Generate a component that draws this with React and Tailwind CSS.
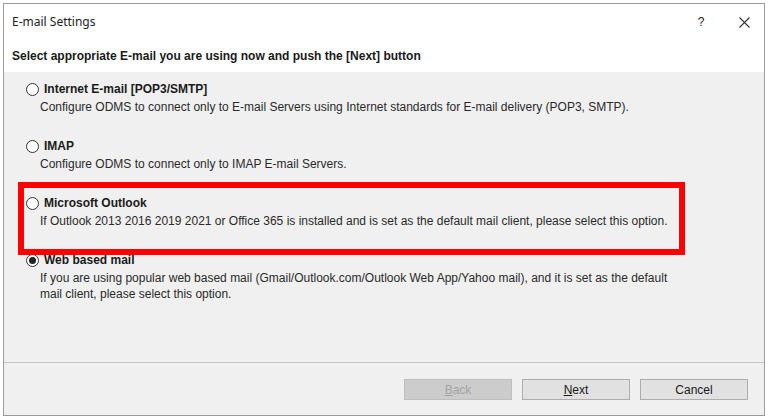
import React, { useState } from 'react';

const options = [
  {
    id: 'pop3',
    label: 'Internet E-mail [POP3/SMTP]',
    desc: ['Configure ODMS to connect only to E-mail Servers using Internet standards for E-mail delivery (POP3, SMTP).'],
  },
  {
    id: 'imap',
    label: 'IMAP',
    desc: ['Configure ODMS to connect only to IMAP E-mail Servers.'],
  },
  {
    id: 'outlook',
    label: 'Microsoft Outlook',
    desc: ['If Outlook 2013 2016 2019 2021 or Office 365 is installed and is set as the default mail client, please select this option.'],
  },
  {
    id: 'web',
    label: 'Web based mail',
    desc: [
      'If you are using popular web based mail (Gmail/Outlook.com/Outlook Web App/Yahoo mail), and it is set as the default',
      'mail client, please select this option.',
    ],
  },
];

function Radio({ checked }) {
  return (
    <span className="w-[13px] h-[13px] rounded-full border border-[#333] bg-white flex items-center justify-center shrink-0">
      {checked && <span className="w-[7px] h-[7px] rounded-full bg-[#222]" />}
    </span>
  );
}

export default function App() {
  const [selected, setSelected] = useState('web');

  return (
    <div className="relative w-[768px] h-[418px] bg-white pt-[3px] pl-[3px] font-['Liberation_Sans',Arial,sans-serif]">
      <div className="w-[762px] h-[413px] border border-[#9c9c9c] flex flex-col">
        {/* title bar */}
        <div className="h-[36px] bg-white flex items-center pl-[8px] pr-[14px] text-[12px] text-[#222] font-['Noto_Sans',sans-serif]">
          <span className="flex-1">E-mail Settings</span>
          <span className="w-[14px] text-center font-['Liberation_Sans',sans-serif]">?</span>
          <svg className="ml-[31px]" width="11" height="11" viewBox="0 0 11 11">
            <path d="M0.5 0.5 L10.5 10.5 M10.5 0.5 L0.5 10.5" stroke="#333" strokeWidth="1.1" fill="none" />
          </svg>
        </div>

        {/* header */}
        <div className="h-[32px] bg-white flex items-center pl-[8px] text-[12px] font-bold text-[#1a1a1a]">
          Select appropriate E-mail you are using now and push the [Next] button
        </div>

        {/* options */}
        <div className="flex-1 bg-[#f0f0f0] pt-[8px] pl-[22px] flex flex-col gap-[22px]">
          {options.map((o) => (
            <div key={o.id} className="cursor-default" onClick={() => setSelected(o.id)}>
              <div className="flex items-center h-[18px]">
                <Radio checked={selected === o.id} />
                <span className="ml-[5px] text-[12px] font-bold text-[#1a1a1a]">{o.label}</span>
              </div>
              <div className="mt-[1px] pl-[14px] text-[12px] leading-[16px] text-[#2a2a2a]">
                {o.desc.map((d) => (
                  <div key={d}>{d}</div>
                ))}
              </div>
            </div>
          ))}
        </div>

        {/* footer */}
        <div className="h-[53px] border-t border-[#c4c4c4] bg-[#f0f0f0] flex justify-end items-start pt-[16px] pr-[16px] gap-[10px] text-[12px]">
          <button className="w-[108px] h-[21px] bg-[#cccccc] border border-[#bfbfbf] text-[#a3a3a3]">
            <span className="underline">B</span>ack
          </button>
          <button className="w-[108px] h-[21px] bg-[#e1e1e1] border border-[#adadad] text-[#1a1a1a]">
            <span className="underline">N</span>ext
          </button>
          <button className="w-[108px] h-[21px] bg-[#e1e1e1] border border-[#adadad] text-[#1a1a1a]">
            Cancel
          </button>
        </div>
      </div>

      {/* red highlight around Microsoft Outlook */}
      <div className="absolute left-[18px] top-[182px] w-[667px] h-[73px] border-[6px] border-[#ff0000] pointer-events-none" />
    </div>
  );
}
